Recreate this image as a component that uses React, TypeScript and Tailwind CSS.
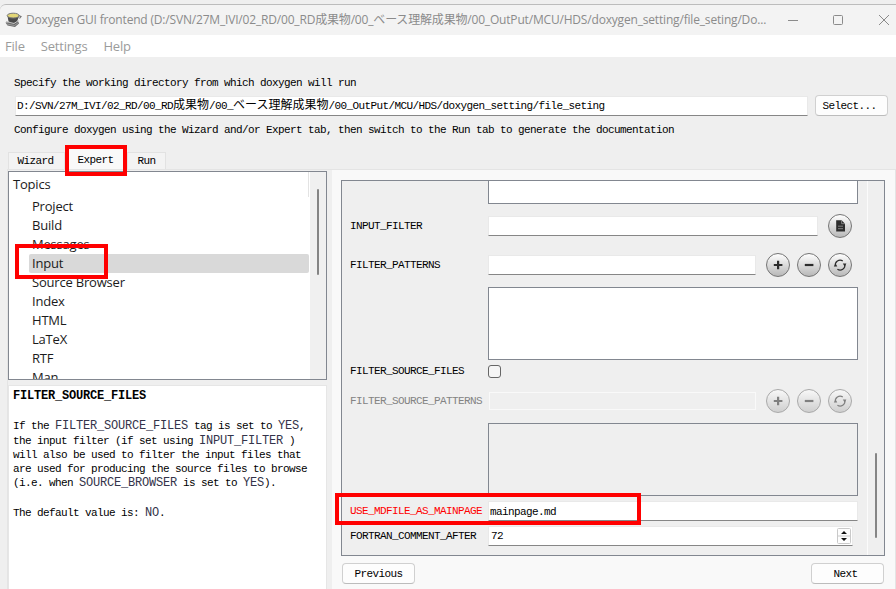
import type { ReactNode } from "react";
import clsx from "clsx";

const topics = ["Project", "Build", "Messages", "Input", "Source Browser", "Index", "HTML", "LaTeX", "RTF", "Man"];

const mono = "font-['Liberation_Mono','Noto_Sans_CJK_JP',monospace] text-[11px] tracking-[-0.6px] whitespace-pre";
const sans = "font-['Open_Sans','Noto_Sans_CJK_JP',sans-serif]";

// full width glyphs take exactly two columns of the mono text
function Wide({ children }: { children: ReactNode }) {
  return <span className="text-[12px] tracking-normal">{children}</span>;
}

// option names inside the help text are set slightly wider
function Opt({ children }: { children: ReactNode }) {
  return <span className="text-[12px] tracking-[-0.2px] text-[#33334a]">{children}</span>;
}

function AppIcon() {
  return (
    <svg width="17" height="16" viewBox="0 0 17 16" className="shrink-0">
      <path d="M0.5 10.5 L2.5 13.5 L10 15 L14 11.5 L13 9 Z" fill="#6a6a6a" />
      <path d="M2.5 4 L3.5 9.5 Q8 12 12 9.5 L14 4.5 Z" fill="#4a4a4a" />
      <path d="M1 9.5 L9 11.5 L13.5 8.5" fill="none" stroke="#c4c4c4" strokeWidth="1" />
      <path d="M2 12 L9.5 13.5 L13.5 10.5" fill="none" stroke="#a8a8a8" strokeWidth="0.8" />
      <ellipse cx="8.2" cy="3.6" rx="6" ry="2.4" fill="#e2d676" stroke="#777" strokeWidth="1" />
      <path d="M13.5 3.5 L16 4.5 L14.5 6.5" fill="none" stroke="#777" strokeWidth="1.2" />
    </svg>
  );
}

function TitleBar() {
  return (
    <div className="flex h-[31px] shrink-0 items-center rounded-tl-[6px] border-t border-[#bcbcbc] bg-[#f3f3f3] pl-[5px] text-[#8b8b8b]">
      <AppIcon />
      <span className={clsx(sans, "ml-1 w-[742px] shrink-0 text-[12px] tracking-[-0.18px] whitespace-pre")}>
        Doxygen GUI frontend (D:/SVN/27M_IVI/02_RD/00_RD成果物/00_ベース理解成果物/00_OutPut/MCU/HDS/doxygen_setting/file_seting/Do...
      </span>
      <svg width="104" height="12" viewBox="0 0 104 12" fill="none" stroke="#8b8b8b" className="ml-5 shrink-0">
        <path d="M0 6.5 H10" />
        <rect x="45.5" y="1.5" width="9" height="9" rx="1" />
        <path d="M91 1 L101 11 M101 1 L91 11" />
      </svg>
    </div>
  );
}

function Button({ children, className }: { children: ReactNode; className?: string }) {
  return (
    <button
      className={clsx(
        mono,
        "flex h-[21px] shrink-0 items-center justify-center rounded-[4px] border border-[#d0d0d0] border-b-[#bcbcbc] bg-[#fdfdfd] pt-0.5 text-black",
        className,
      )}
    >
      {children}
    </button>
  );
}

function Field({ children, className }: { children?: ReactNode; className?: string }) {
  return (
    <div
      className={clsx(
        mono,
        "flex h-5 shrink-0 items-center border border-[#e9e9e9] border-b-[#868686] bg-white pl-px text-black",
        className,
      )}
    >
      {children}
    </div>
  );
}

function RoundButton({ kind, disabled }: { kind: "file" | "add" | "remove" | "refresh"; disabled?: boolean }) {
  return (
    <button
      className={clsx(
        "flex size-6 shrink-0 items-center justify-center rounded-full border bg-linear-to-b",
        disabled ? "border-[#a9a9a9] from-[#f8f8f8] to-[#cfcfcf] text-[#808080]" : "border-[#757575] from-white to-[#b8b8b8] text-[#2c2c2c]",
      )}
    >
      <svg width="14" height="14" viewBox="0 0 14 14" fill="none" stroke="currentColor">
        {kind === "add" && <path d="M2.8 7 H11.4 M7.1 2.8 V11.2" strokeWidth="2.2" />}
        {kind === "remove" && <path d="M2.8 7 H11.4" strokeWidth="2.2" />}
        {kind === "file" && (
          <>
            <path d="M3.2 1.3 H8.6 L12 4.7 V12.4 H3.2 Z" fill="currentColor" stroke="none" />
            <path d="M8.6 1.3 V4.7 H12 M5 7.2 H10 M5 9.7 H10" stroke="#999" strokeWidth="0.8" />
          </>
        )}
        {kind === "refresh" && (
          <>
            <path d="M2.4 8 A4.8 4.8 0 0 1 9.8 3 M11.8 6.2 A4.8 4.8 0 0 1 4.4 11.2" strokeWidth="1.2" />
            <path d="M0.8 8.6 L4.3 8.6 L2.6 5.6 Z M13.4 5.6 L9.8 5.6 L11.7 8.6 Z" fill="currentColor" stroke="none" />
          </>
        )}
      </svg>
    </button>
  );
}

function Label({ children, className }: { children?: ReactNode; className?: string }) {
  return <div className={clsx(mono, "w-[138px] shrink-0", className)}>{children}</div>;
}

function TopicList() {
  return (
    <div className="flex h-[209px] w-[319px] shrink-0 overflow-hidden border border-[#828790] bg-white">
      <div className={clsx(sans, "w-[300px] shrink-0 text-[13px] tracking-[-0.2px] text-[#1b1b1b]")}>
        <div className="h-[25px] border-r border-[#e3e3e3] pl-1 leading-[25px]">Topics</div>
        {topics.map((t) => (
          <div key={t} className="h-[19px] pl-5">
            <div className={clsx("h-[19px] rounded-[2px] pl-[3px] leading-[19px]", t === "Input" && "bg-[#d9d9d9]")}>{t}</div>
          </div>
        ))}
      </div>
      <div className="ml-px flex flex-1 justify-center bg-[#f0f0f0] pt-[17px]">
        <div className="h-[86px] w-0.5 rounded bg-[#858585]" />
      </div>
    </div>
  );
}

function HelpText() {
  return (
    <div className={clsx(mono, "mt-[5px] h-[210px] w-[319px] border border-[#e6e6e6] bg-white pl-1 text-black")}>
      <div className="mt-[3px] h-[15px] text-[12px] leading-[15px] font-bold tracking-[-0.2px]">FILTER_SOURCE_FILES</div>
      <div className="mt-[15px] h-[15px] leading-[15px]">
        If the <Opt>FILTER_SOURCE_FILES</Opt> tag is set to <Opt>YES</Opt>,
      </div>
      <div className="h-[14px] leading-[14px]">
        the input filter (if set using <Opt>INPUT_FILTER</Opt> )
      </div>
      <div className="h-[14px] leading-[14px]">will also be used to filter the input files that</div>
      <div className="h-[14px] leading-[14px]">are used for producing the source files to browse</div>
      <div className="h-[15px] leading-[15px]">
        (i.e. when <Opt>SOURCE_BROWSER</Opt> is set to <Opt>YES</Opt>).
      </div>
      <div className="mt-[15px] h-[15px] leading-[15px]">
        The default value is: <Opt>NO</Opt>.
      </div>
    </div>
  );
}

function Settings() {
  return (
    <div className="flex h-[376px] w-[544px] overflow-hidden border border-[#828790] bg-[#efefef]">
      <div className="w-[525px] shrink-0 pl-2">
        <div className="ml-[138px] h-[23px] w-[370px] border border-t-0 border-[#828790] bg-white" />
        <div className="mt-[10px] flex h-6 items-center">
          <Label>INPUT_FILTER</Label>
          <Field className="w-[330px]" />
          <div className="ml-[10px] flex">
            <RoundButton kind="file" />
          </div>
        </div>
        <div className="mt-[15px] flex h-6 items-center">
          <Label>FILTER_PATTERNS</Label>
          <Field className="w-[268px]" />
          <div className="ml-[10px] flex gap-[7px]">
            <RoundButton kind="add" />
            <RoundButton kind="remove" />
            <RoundButton kind="refresh" />
          </div>
        </div>
        <div className="mt-[10px] ml-[138px] h-[73px] w-[370px] border border-[#828790] bg-white" />
        <div className="mt-[5px] flex h-[13px] items-center">
          <Label>FILTER_SOURCE_FILES</Label>
          <div className="size-[13px] rounded-[3px] border border-[#666] bg-[#f5f5f5]" />
        </div>
        <div className="mt-[11px] flex h-6 items-center">
          <Label className="text-[#838383]">FILTER_SOURCE_PATTERNS</Label>
          <div className="ml-px h-[18px] w-[267px] border border-[#f9f9f9]" />
          <div className="ml-[10px] flex gap-[7px]">
            <RoundButton kind="add" disabled />
            <RoundButton kind="remove" disabled />
            <RoundButton kind="refresh" disabled />
          </div>
        </div>
        <div className="mt-[10px] ml-[138px] h-[73px] w-[370px] border border-[#828790]" />
        <div className="mt-[5px] flex h-5 items-center">
          <Label className="text-[#ff0000]">USE_MDFILE_AS_MAINPAGE</Label>
          <Field className="w-[370px] pt-0.5">mainpage.md</Field>
        </div>
        <div className="mt-[5px] flex h-5 items-center">
          <Label>FORTRAN_COMMENT_AFTER</Label>
          <Field className="w-[365px] justify-between">
            <span className="pl-px">72</span>
            <svg width="14" height="16" viewBox="0 0 14 16" className="mr-px">
              <rect x="0.5" y="0.5" width="13" height="15" rx="1" fill="#fdfdfd" stroke="#c9c9c9" />
              <path d="M0 8 H14" stroke="#c9c9c9" />
              <path d="M4 6 L7 3 L10 6 Z M4 10 L7 13 L10 10 Z" fill="#111" />
            </svg>
          </Field>
        </div>
      </div>
      <div className="flex flex-1 items-start border-l border-[#fbfbfb] pl-[7px]">
        <div className="mt-[272px] h-[85px] w-0.5 rounded bg-[#858585]" />
      </div>
    </div>
  );
}

export default function App() {
  return (
    <div className="relative flex h-[589px] w-[896px] flex-col overflow-hidden bg-[#efefef] pt-1">
      <TitleBar />
      <div
        className={clsx(
          sans,
          "flex h-[22px] shrink-0 items-center gap-4 bg-white pt-0.5 pl-[5px] text-[13px] tracking-[-0.2px] text-[#9b9b9b]",
        )}
      >
        <span>File</span>
        <span>Settings</span>
        <span>Help</span>
      </div>

      <div className="h-[95px] shrink-0 pt-[18px]">
        <div className={clsx(mono, "pl-[14px] leading-4")}>Specify the working directory from which doxygen will run</div>
        <div className="mt-1 flex h-[21px] items-center pl-[15px]">
          <Field className="w-[793px]">
            <span>
              D:/SVN/27M_IVI/02_RD/00_RD<Wide>成果物</Wide>/00_<Wide>ベース理解成果物</Wide>/00_OutPut/MCU/HDS/doxygen_setting/file_seting
            </span>
          </Field>
          <Button className="ml-[7px] w-[73px] pr-1">Select...</Button>
        </div>
        <div className={clsx(mono, "mt-1.5 pl-[14px] leading-4")}>
          Configure doxygen using the Wizard and/or Expert tab, then switch to the Run tab to generate the documentation
        </div>
      </div>

      <div className={clsx(mono, "flex h-[17px] shrink-0 items-end pl-2")}>
        <div className="flex h-[17px] w-[57px] items-center justify-center border border-b-0 border-[#e2e2e2] bg-[#f3f3f3] pt-px pr-0.5">
          Wizard
        </div>
        <div className="flex h-5 w-[62px] items-center justify-center bg-[#f9f9f9] pt-[3px] pr-px">Expert</div>
        <div className="flex h-[17px] w-[39px] items-center justify-center border border-b-0 border-[#e2e2e2] bg-[#f3f3f3] pt-px">
          Run
        </div>
      </div>

      <div className="ml-[7px] flex h-[426px] w-[889px] shrink-0 border border-[#e4e4e4]">
        <div className="w-[324px] shrink-0 pt-px">
          <TopicList />
          <HelpText />
        </div>
        <div className="flex-1 bg-[#f9f9f9] pt-[10px] pl-[9px]">
          <Settings />
          <div className="mt-[7px] flex w-[543px] justify-between pl-px">
            <Button className="w-[73px]">Previous</Button>
            <Button className="w-[73px] pr-1">Next</Button>
          </div>
        </div>
      </div>

      {/* highlight frames drawn over the window */}
      <div className="absolute top-[145px] left-[65px] h-[31px] w-[62px] border-4 border-[#ff0000]" />
      <div className="absolute top-[244px] left-[15px] h-[35px] w-[93px] border-4 border-[#ff0000]" />
      <div className="absolute top-[493px] left-[335px] h-[32px] w-[306px] border-4 border-[#ff0000]" />
    </div>
  );
}
